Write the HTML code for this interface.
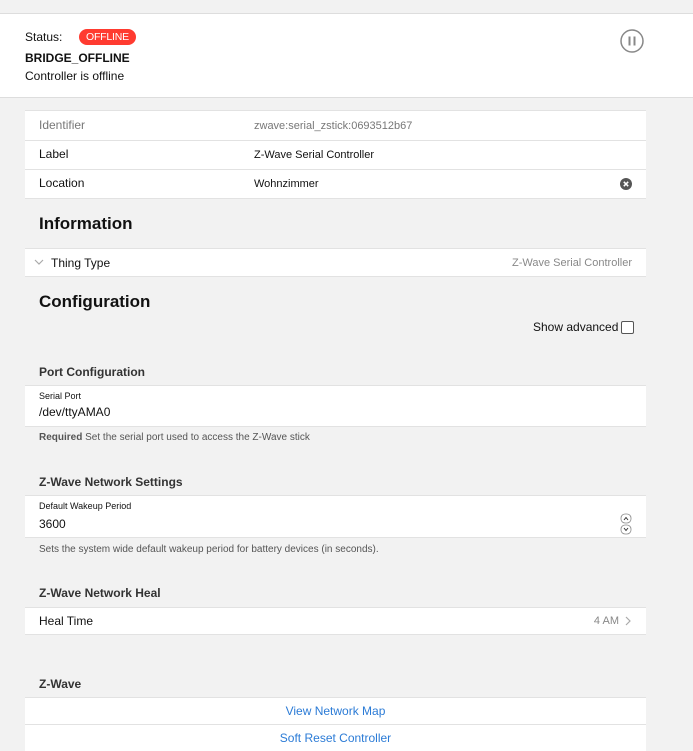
<!DOCTYPE html>
<html><head><style>
body{margin:0;width:693px;height:750px;background:#f2f2f2;font-family:"Liberation Sans",sans-serif;position:relative;overflow:hidden;color:#111}
.a{position:absolute}
.hdr{left:0;top:13px;width:693px;height:83px;background:#fff;border-top:1px solid #ddd;border-bottom:1px solid #ddd}
.card{left:25px;width:621px;background:#fff}
.row{position:absolute;left:0;width:621px;border-bottom:1px solid #e2e2e2}
.t{position:absolute;white-space:nowrap}
h2{margin:0;font-size:17px;font-weight:bold;position:absolute;left:39px;color:#111}
h3{margin:0;font-size:12px;font-weight:bold;position:absolute;left:39px;color:#333}
.s{font-size:11px;color:#555}
</style></head><body>
<div class="a hdr">
 <div class="t" style="left:25px;top:16px;font-size:12px">Status:</div>
 <div class="t" style="left:79px;top:15px;background:#ff3b30;color:#fff;border-radius:9px;padding:2px 7px;font-size:10.5px;letter-spacing:-0.2px">OFFLINE</div>
 <div class="t" style="left:25px;top:37px;font-size:12px;font-weight:bold">BRIDGE_OFFLINE</div>
 <div class="t" style="left:25px;top:55px;font-size:12px">Controller is offline</div>
 <svg class="a" style="left:620px;top:15px" width="24" height="24"><circle cx="12" cy="12" r="11" fill="none" stroke="#888" stroke-width="1.5"/><rect x="8.5" y="7.5" width="2" height="9" fill="#888"/><rect x="13.5" y="7.5" width="2" height="9" fill="#888"/></svg>
</div>
<div class="a card" style="top:110px;height:88px;border-top:1px solid #e2e2e2">
 <div class="row" style="top:0;height:29px"><span class="t" style="left:14px;top:7px;font-size:12px;color:#777">Identifier</span><span class="t" style="left:229px;top:9px;font-size:11px;color:#777">zwave:serial_zstick:0693512b67</span></div>
 <div class="row" style="top:29px;height:29px"><span class="t" style="left:14px;top:7px;font-size:12px">Label</span><span class="t" style="left:229px;top:9px;font-size:11px">Z-Wave Serial Controller</span></div>
 <div class="row" style="top:58px;height:29px"><span class="t" style="left:14px;top:7px;font-size:12px">Location</span><span class="t" style="left:229px;top:9px;font-size:11px">Wohnzimmer</span>
 <svg class="a" style="left:595px;top:9px" width="12" height="12"><circle cx="6" cy="6" r="6" fill="#555"/><path d="M3.8 3.8L8.2 8.2M8.2 3.8L3.8 8.2" stroke="#fff" stroke-width="1.5"/></svg></div>
</div>
<h2 style="top:214px">Information</h2>
<div class="a card" style="top:248px;height:27px;border-top:1px solid #e2e2e2;border-bottom:1px solid #e2e2e2">
 <svg class="a" style="left:9px;top:10px" width="10" height="7"><path d="M1 1L5 5L9 1" fill="none" stroke="#aaa" stroke-width="1.2"/></svg>
 <span class="t" style="left:26px;top:7px;font-size:12px">Thing Type</span>
 <span class="t" style="right:14px;top:8px;font-size:11px;color:#888">Z-Wave Serial Controller</span>
</div>
<h2 style="top:292px">Configuration</h2>
<div class="t" style="left:533px;top:320px;font-size:12px">Show advanced</div>
<div class="a" style="left:621px;top:321px;width:11px;height:11px;border:1px solid #555;border-radius:2px;background:#fff"></div>
<h3 style="top:365px">Port Configuration</h3>
<div class="a card" style="top:385px;height:40px;border-top:1px solid #e2e2e2;border-bottom:1px solid #e2e2e2">
 <span class="t" style="left:14px;top:5px;font-size:9px">Serial Port</span>
 <span class="t" style="left:14px;top:19px;font-size:12px">/dev/ttyAMA0</span>
</div>
<div class="t s" style="left:39px;top:432px;font-size:10px"><b>Required</b> Set the serial port used to access the Z-Wave stick</div>
<h3 style="top:475px">Z-Wave Network Settings</h3>
<div class="a card" style="top:495px;height:41px;border-top:1px solid #e2e2e2;border-bottom:1px solid #e2e2e2">
 <span class="t" style="left:14px;top:5px;font-size:9px">Default Wakeup Period</span>
 <span class="t" style="left:14px;top:21px;font-size:12px">3600</span>
 <svg class="a" style="left:595px;top:17px" width="12" height="22"><rect x="1" y="1" width="10" height="9" rx="4" fill="none" stroke="#888" stroke-width=".8"/><rect x="1" y="12" width="10" height="9" rx="4" fill="none" stroke="#888" stroke-width=".8"/><path d="M4 7L6 4.5L8 7M4 15L6 17.5L8 15" fill="none" stroke="#333" stroke-width="1"/></svg>
</div>
<div class="t s" style="left:39px;top:544px;font-size:10px">Sets the system wide default wakeup period for battery devices (in seconds).</div>
<h3 style="top:586px">Z-Wave Network Heal</h3>
<div class="a card" style="top:607px;height:26px;border-top:1px solid #e2e2e2;border-bottom:1px solid #e2e2e2">
 <span class="t" style="left:14px;top:6px;font-size:12px">Heal Time</span>
 <span class="t" style="right:27px;top:7px;font-size:11px;color:#888">4 AM</span>
 <svg class="a" style="left:600px;top:8px" width="7" height="10"><path d="M1 1L5 5L1 9" fill="none" stroke="#aaa" stroke-width="1.2"/></svg>
</div>
<h3 style="top:677px">Z-Wave</h3>
<div class="a card" style="top:697px;height:53px;border-top:1px solid #e2e2e2">
 <div class="row" style="top:0;height:26px"><span class="t" style="left:0;width:621px;text-align:center;top:6px;font-size:12px;color:#2b7bd6">View Network Map</span></div>
 <div class="row" style="top:26px;height:27px;border:0"><span class="t" style="left:0;width:621px;text-align:center;top:7px;font-size:12px;color:#2b7bd6">Soft Reset Controller</span></div>
</div>
</body></html>
